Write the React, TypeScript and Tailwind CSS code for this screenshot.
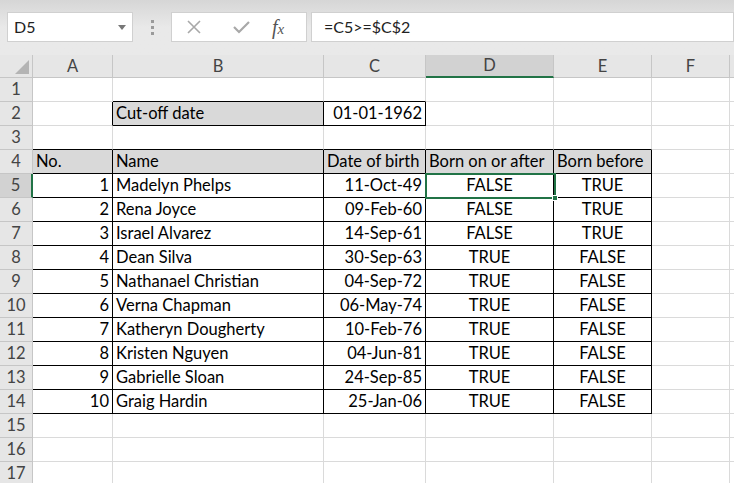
import React from 'react';

const COLS = ['A', 'B', 'C', 'D', 'E', 'F', ''];
const COL_W = ['w-[80px]', 'w-[211px]', 'w-[102px]', 'w-[128px]', 'w-[98px]', 'w-[78px]', 'w-[60px]'];

type Cell = { text?: string; align?: 'l' | 'r' | 'c'; fill?: boolean };

const people: [string, string, boolean][] = [
  ['Madelyn Phelps', '11-Oct-49', false],
  ['Rena Joyce', '09-Feb-60', false],
  ['Israel Alvarez', '14-Sep-61', false],
  ['Dean Silva', '30-Sep-63', true],
  ['Nathanael Christian', '04-Sep-72', true],
  ['Verna Chapman', '06-May-74', true],
  ['Katheryn Dougherty', '10-Feb-76', true],
  ['Kristen Nguyen', '04-Jun-81', true],
  ['Gabrielle Sloan', '24-Sep-85', true],
  ['Graig Hardin', '25-Jan-06', true],
];

function buildSheet(): Cell[][] {
  const rows: Cell[][] = Array.from({ length: 17 }, () => COLS.map(() => ({})));
  rows[1][1] = { text: 'Cut-off date', fill: true };
  rows[1][2] = { text: '01-01-1962', align: 'r' };
  ['No.', 'Name', 'Date of birth', 'Born on or after', 'Born before'].forEach((h, i) => {
    rows[3][i] = { text: h, fill: true };
  });
  people.forEach(([name, dob, after], i) => {
    const r = rows[4 + i];
    r[0] = { text: String(i + 1), align: 'r' };
    r[1] = { text: name };
    r[2] = { text: dob, align: 'r' };
    r[3] = { text: after ? 'TRUE' : 'FALSE', align: 'c' };
    r[4] = { text: after ? 'FALSE' : 'TRUE', align: 'c' };
  });
  return rows;
}

// cells with a thin black outline
function boxed(r: number, c: number) {
  if (r === 1 && (c === 1 || c === 2)) return true;
  return r >= 3 && r <= 13 && c >= 0 && c <= 4;
}

export default function App() {
  const sheet = buildSheet();

  return (
    <div className="w-[734px] h-[483px] overflow-hidden bg-white text-[16.5px] text-black" style={{ fontFamily: 'Lato, "Open Sans", sans-serif' }}>
      {/* Formula bar */}
      <div className="h-[55px] bg-gradient-to-b from-[#d6d6d6] via-[#e9e9e9] to-[#e9e9e9] pt-[12px] flex items-start">
        <div className="ml-[7px] w-[126px] h-[30px] shrink-0 bg-white border border-[#d0d0d0] flex items-center justify-between pl-[6px] pr-[6px]">
          <span className="text-[16px] text-[#222]">D5</span>
          <svg width="8" height="5" viewBox="0 0 8 5"><path d="M0 0h8L4 5z" fill="#777" /></svg>
        </div>
        <div className="w-[38px] h-[30px] shrink-0 flex flex-col items-center justify-center gap-[3px]">
          <span className="w-[3px] h-[3px] bg-[#9a9a9a]" />
          <span className="w-[3px] h-[3px] bg-[#9a9a9a]" />
          <span className="w-[3px] h-[3px] bg-[#9a9a9a]" />
        </div>
        <div className="w-[136px] h-[30px] shrink-0 bg-white border border-[#d0d0d0] flex items-center">
          <svg className="ml-[15px]" width="14" height="14" viewBox="0 0 14 14"><path d="M1 1l12 12M13 1L1 13" stroke="#a8a8a8" strokeWidth="1.6" /></svg>
          <svg className="ml-[32px]" width="17" height="13" viewBox="0 0 17 13"><path d="M1 6l5 5L16 1" stroke="#a8a8a8" strokeWidth="2.2" fill="none" /></svg>
          <span className="ml-[22px] text-[20px] leading-none italic text-[#555]" style={{ fontFamily: '"Liberation Serif", serif' }}>
            f<span className="text-[15px]">x</span>
          </span>
        </div>
        <div className="ml-[4px] flex-1 h-[30px] bg-white border border-[#d0d0d0] flex items-center pl-[12px]">
          <span className="text-[16px] text-[#222]">=C5&gt;=$C$2</span>
        </div>
      </div>

      {/* Column headers */}
      <div className="flex h-[23px] bg-[#e6e6e6]">
        <div className="w-[33px] shrink-0 h-full border-r border-b border-[#c6c6c6] flex items-end justify-end pr-[3px] pb-[3px]">
          <svg width="14" height="14" viewBox="0 0 14 14"><path d="M14 0v14H0z" fill="#b4b4b4" /></svg>
        </div>
        {COLS.map((c, i) => (
          <div
            key={i}
            className={`${COL_W[i]} shrink-0 h-full border-r border-[#c6c6c6] flex items-center justify-center text-[#444] ${
              c === 'D' ? 'bg-[#d2d2d2] border-b-2 border-b-[#217346] text-[#215a36]' : 'border-b border-b-[#c6c6c6]'
            }`}
          >
            {c}
          </div>
        ))}
      </div>

      {/* Rows */}
      <div className="relative">
        {sheet.map((row, r) => (
          <div key={r} className="flex h-[24px]">
            <div
              className={`w-[33px] shrink-0 h-full border-b border-[#c6c6c6] flex items-center justify-center text-[#444] ${
                r === 4 ? 'bg-[#d2d2d2] border-r-2 border-r-[#217346] text-[#215a36]' : 'bg-[#e6e6e6] border-r border-r-[#c6c6c6]'
              }`}
            >
              {r + 1}
            </div>
            {row.map((cell, c) => {
              const rightBlack = boxed(r, c) || boxed(r, c + 1);
              const bottomBlack = boxed(r, c) || boxed(r + 1, c);
              return (
                <div
                  key={c}
                  className={`${COL_W[c]} shrink-0 h-full border-r border-b px-[3px] flex items-center whitespace-nowrap overflow-hidden ${
                    rightBlack ? 'border-r-black' : 'border-r-[#dadada]'
                  } ${bottomBlack ? 'border-b-black' : 'border-b-[#dadada]'} ${cell.fill ? 'bg-[#d9d9d9]' : ''} ${
                    cell.align === 'r' ? 'justify-end' : cell.align === 'c' ? 'justify-center' : 'justify-start'
                  }`}
                >
                  {cell.text}
                </div>
              );
            })}
          </div>
        ))}

        {/* Active cell D5 */}
        <div className="absolute left-[425px] top-[95px] w-[131px] h-[26px] border-2 border-[#217346] pointer-events-none">
          <div className="absolute -right-[4px] -bottom-[4px] w-[6px] h-[6px] bg-[#217346] border border-white" />
        </div>
      </div>
    </div>
  );
}
